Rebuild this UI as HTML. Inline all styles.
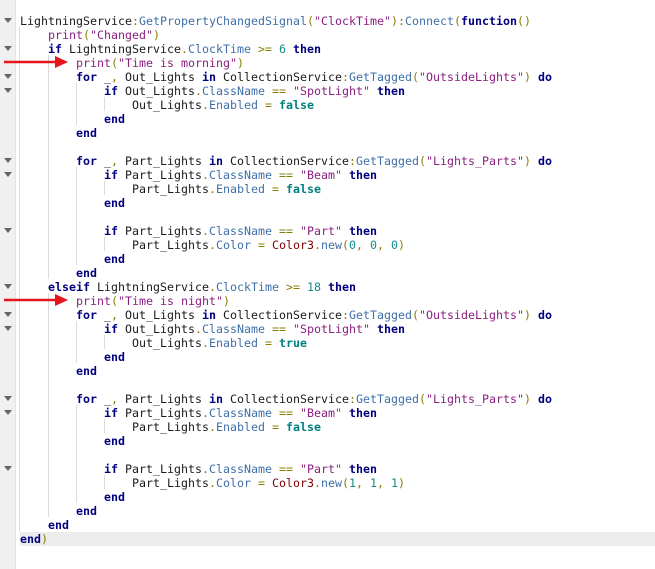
<!DOCTYPE html>
<html><head><meta charset="utf-8"><style>
html,body{margin:0;padding:0;background:#fff;width:655px;height:569px;overflow:hidden;position:relative}
.gut{position:absolute;left:0;top:0;width:15px;height:569px;background:#f0f0f0;border-right:1px solid #e4e4e4}
.ln{position:absolute;left:20px;height:14px;line-height:14px;font-family:"DejaVu Sans Mono","Liberation Mono",monospace;font-size:11.63px;color:#1a1a1a;white-space:pre;margin-top:1px}
.k{color:#00007f;font-weight:bold}
.m{color:#3f6fa8}
.s{color:#8a1f80}
.n{color:#138a8a}
.o{color:#8a7c00}
.b{color:#007f7f;font-weight:bold}
.c{color:#7f0000}
.hl{position:absolute;left:20px;top:532px;width:635px;height:14px;background:#ececec}
.g{position:absolute;width:1px;background:#dcdcdc}
.t{position:absolute;left:4px;width:0;height:0;border-left:4px solid transparent;border-right:4px solid transparent;border-top:5px solid #666}
</style></head><body>
<div class="gut"></div>
<div class="hl"></div>
<div class="g" style="left:19px;top:27px;height:505px"></div>
<div class="g" style="left:48px;top:55px;height:224px"></div>
<div class="g" style="left:48px;top:293px;height:224px"></div>
<div class="g" style="left:76px;top:83px;height:42px"></div>
<div class="g" style="left:76px;top:167px;height:98px"></div>
<div class="g" style="left:76px;top:321px;height:42px"></div>
<div class="g" style="left:76px;top:405px;height:98px"></div>
<div class="g" style="left:104px;top:97px;height:14px"></div>
<div class="g" style="left:104px;top:181px;height:14px"></div>
<div class="g" style="left:104px;top:237px;height:14px"></div>
<div class="g" style="left:104px;top:335px;height:14px"></div>
<div class="g" style="left:104px;top:419px;height:14px"></div>
<div class="g" style="left:104px;top:475px;height:14px"></div>

<div class="t" style="top:18px"></div><div class="t" style="top:46px"></div><div class="t" style="top:74px"></div><div class="t" style="top:88px"></div><div class="t" style="top:158px"></div><div class="t" style="top:172px"></div><div class="t" style="top:228px"></div><div class="t" style="top:284px"></div><div class="t" style="top:312px"></div><div class="t" style="top:326px"></div><div class="t" style="top:396px"></div><div class="t" style="top:410px"></div><div class="t" style="top:466px"></div>

<div class="ln" style="top:13px">LightningService<span class="o">:</span><span class="m">GetPropertyChangedSignal</span><span class="o">(</span><span class="s">"ClockTime"</span><span class="o">):</span><span class="m">Connect</span><span class="o">(</span><span class="k">function</span><span class="o">()</span></div>
<div class="ln" style="top:27px">    <span class="s">print</span><span class="o">(</span><span class="s">"Changed"</span><span class="o">)</span></div>
<div class="ln" style="top:41px">    <span class="k">if</span> LightningService<span class="o">.</span><span class="m">ClockTime</span> <span class="o">&gt;=</span> <span class="n">6</span> <span class="k">then</span></div>
<div class="ln" style="top:55px">        <span class="s">print</span><span class="o">(</span><span class="s">"Time is morning"</span><span class="o">)</span></div>
<div class="ln" style="top:69px">        <span class="k">for</span> _<span class="o">,</span> Out_Lights <span class="k">in</span> CollectionService<span class="o">:</span><span class="m">GetTagged</span><span class="o">(</span><span class="s">"OutsideLights"</span><span class="o">)</span> <span class="k">do</span></div>
<div class="ln" style="top:83px">            <span class="k">if</span> Out_Lights<span class="o">.</span><span class="m">ClassName</span> <span class="o">==</span> <span class="s">"SpotLight"</span> <span class="k">then</span></div>
<div class="ln" style="top:97px">                Out_Lights<span class="o">.</span><span class="m">Enabled</span> <span class="o">=</span> <span class="b">false</span></div>
<div class="ln" style="top:111px">            <span class="k">end</span></div>
<div class="ln" style="top:125px">        <span class="k">end</span></div>
<div class="ln" style="top:153px">        <span class="k">for</span> _<span class="o">,</span> Part_Lights <span class="k">in</span> CollectionService<span class="o">:</span><span class="m">GetTagged</span><span class="o">(</span><span class="s">"Lights_Parts"</span><span class="o">)</span> <span class="k">do</span></div>
<div class="ln" style="top:167px">            <span class="k">if</span> Part_Lights<span class="o">.</span><span class="m">ClassName</span> <span class="o">==</span> <span class="s">"Beam"</span> <span class="k">then</span></div>
<div class="ln" style="top:181px">                Part_Lights<span class="o">.</span><span class="m">Enabled</span> <span class="o">=</span> <span class="b">false</span></div>
<div class="ln" style="top:195px">            <span class="k">end</span></div>
<div class="ln" style="top:223px">            <span class="k">if</span> Part_Lights<span class="o">.</span><span class="m">ClassName</span> <span class="o">==</span> <span class="s">"Part"</span> <span class="k">then</span></div>
<div class="ln" style="top:237px">                Part_Lights<span class="o">.</span><span class="m">Color</span> <span class="o">=</span> <span class="c">Color3</span><span class="o">.</span><span class="m">new</span><span class="o">(</span><span class="n">0</span><span class="o">,</span> <span class="n">0</span><span class="o">,</span> <span class="n">0</span><span class="o">)</span></div>
<div class="ln" style="top:251px">            <span class="k">end</span></div>
<div class="ln" style="top:265px">        <span class="k">end</span></div>
<div class="ln" style="top:279px">    <span class="k">elseif</span> LightningService<span class="o">.</span><span class="m">ClockTime</span> <span class="o">&gt;=</span> <span class="n">18</span> <span class="k">then</span></div>
<div class="ln" style="top:293px">        <span class="s">print</span><span class="o">(</span><span class="s">"Time is night"</span><span class="o">)</span></div>
<div class="ln" style="top:307px">        <span class="k">for</span> _<span class="o">,</span> Out_Lights <span class="k">in</span> CollectionService<span class="o">:</span><span class="m">GetTagged</span><span class="o">(</span><span class="s">"OutsideLights"</span><span class="o">)</span> <span class="k">do</span></div>
<div class="ln" style="top:321px">            <span class="k">if</span> Out_Lights<span class="o">.</span><span class="m">ClassName</span> <span class="o">==</span> <span class="s">"SpotLight"</span> <span class="k">then</span></div>
<div class="ln" style="top:335px">                Out_Lights<span class="o">.</span><span class="m">Enabled</span> <span class="o">=</span> <span class="b">true</span></div>
<div class="ln" style="top:349px">            <span class="k">end</span></div>
<div class="ln" style="top:363px">        <span class="k">end</span></div>
<div class="ln" style="top:391px">        <span class="k">for</span> _<span class="o">,</span> Part_Lights <span class="k">in</span> CollectionService<span class="o">:</span><span class="m">GetTagged</span><span class="o">(</span><span class="s">"Lights_Parts"</span><span class="o">)</span> <span class="k">do</span></div>
<div class="ln" style="top:405px">            <span class="k">if</span> Part_Lights<span class="o">.</span><span class="m">ClassName</span> <span class="o">==</span> <span class="s">"Beam"</span> <span class="k">then</span></div>
<div class="ln" style="top:419px">                Part_Lights<span class="o">.</span><span class="m">Enabled</span> <span class="o">=</span> <span class="b">false</span></div>
<div class="ln" style="top:433px">            <span class="k">end</span></div>
<div class="ln" style="top:461px">            <span class="k">if</span> Part_Lights<span class="o">.</span><span class="m">ClassName</span> <span class="o">==</span> <span class="s">"Part"</span> <span class="k">then</span></div>
<div class="ln" style="top:475px">                Part_Lights<span class="o">.</span><span class="m">Color</span> <span class="o">=</span> <span class="c">Color3</span><span class="o">.</span><span class="m">new</span><span class="o">(</span><span class="n">1</span><span class="o">,</span> <span class="n">1</span><span class="o">,</span> <span class="n">1</span><span class="o">)</span></div>
<div class="ln" style="top:489px">            <span class="k">end</span></div>
<div class="ln" style="top:503px">        <span class="k">end</span></div>
<div class="ln" style="top:517px">    <span class="k">end</span></div>
<div class="ln" style="top:531px"><span class="k">end</span><span class="o">)</span></div>

<svg style="position:absolute;left:0;top:0" width="80" height="320">
<g fill="#e8141c" stroke="#e8141c">
<line x1="4" y1="62" x2="60" y2="62" stroke-width="2.5"/><polygon points="55,56 68,62 55,68" stroke="none"/>
<line x1="4" y1="300" x2="60" y2="300" stroke-width="2.5"/><polygon points="55,294 68,300 55,306" stroke="none"/>
</g></svg>
</body></html>
